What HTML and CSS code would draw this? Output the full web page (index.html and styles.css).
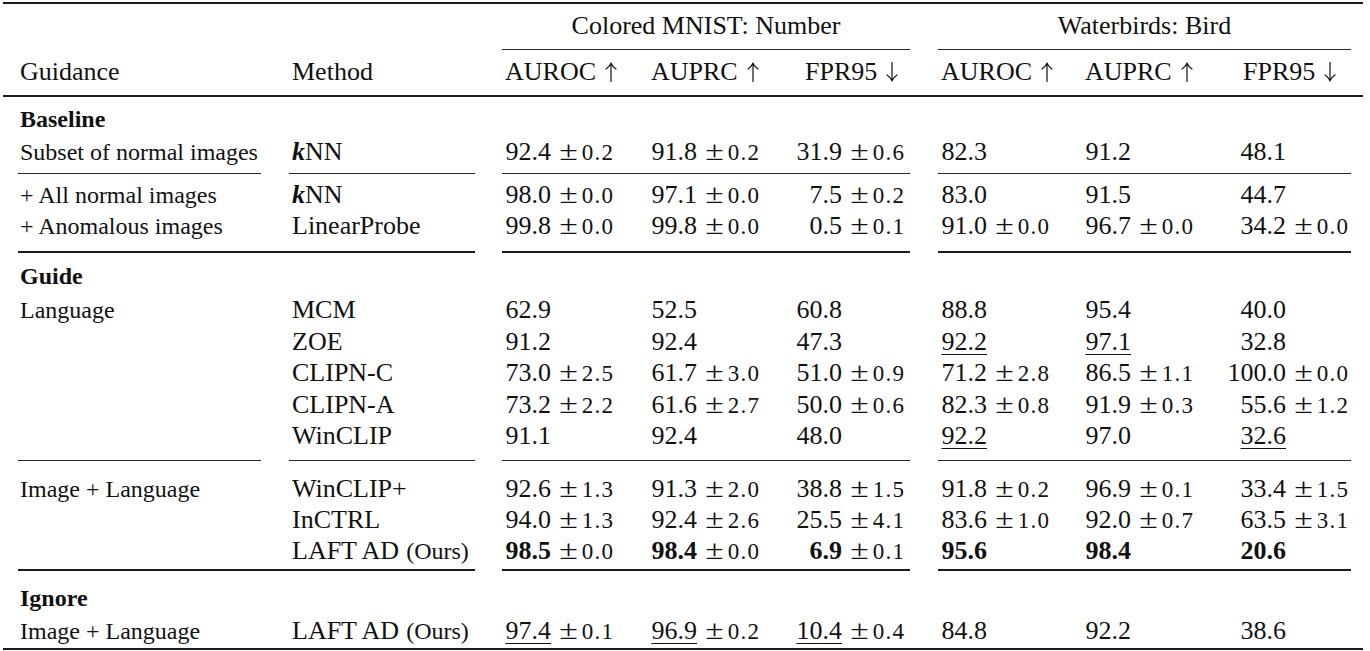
FILE: index.html
```html
<!DOCTYPE html>
<html lang="en">
<head>
<meta charset="utf-8">
<title>LAFT AD results table</title>
<link rel="stylesheet" href="styles.css">
</head>
<body>
<div class="table">
  <div class="rule full top"></div>

  <div class="row head-group">
    <div class="cell"></div>
    <div class="cell"></div>
    <div class="cell grp grp-a">Colored MNIST: Number</div>
    <div class="cell grp grp-b">Waterbirds: Bird</div>
  </div>
  <div class="row seg-row thin gap-group">
    <div class="seg seg-a"></div>
    <div class="seg seg-b"></div>
  </div>

  <div class="row head-cols">
    <div class="cell">Guidance</div>
    <div class="cell">Method</div>
    <div class="cell">AUROC<svg class="arr" viewBox="0 0 14 20" width="14" height="20"><path d="M7 19.5V1.5M2 7Q5.2 5 7 1.2Q8.8 5 12 7"/></svg></div>
    <div class="cell">AUPRC<svg class="arr" viewBox="0 0 14 20" width="14" height="20"><path d="M7 19.5V1.5M2 7Q5.2 5 7 1.2Q8.8 5 12 7"/></svg></div>
    <div class="cell h-fpr-a">FPR95<svg class="arr" viewBox="0 0 14 20" width="14" height="20"><path d="M7 0.5V18.5M2 13Q5.2 15 7 18.8Q8.8 15 12 13"/></svg></div>
    <div class="cell">AUROC<svg class="arr" viewBox="0 0 14 20" width="14" height="20"><path d="M7 19.5V1.5M2 7Q5.2 5 7 1.2Q8.8 5 12 7"/></svg></div>
    <div class="cell">AUPRC<svg class="arr" viewBox="0 0 14 20" width="14" height="20"><path d="M7 19.5V1.5M2 7Q5.2 5 7 1.2Q8.8 5 12 7"/></svg></div>
    <div class="cell h-fpr-b">FPR95<svg class="arr" viewBox="0 0 14 20" width="14" height="20"><path d="M7 0.5V18.5M2 13Q5.2 15 7 18.8Q8.8 15 12 13"/></svg></div>
  </div>
  <div class="rule full mid"></div>

  <div class="row sec first-sec">
    <div class="cell lab sec-title">Baseline</div>
  </div>
  <div class="row tight">
    <div class="cell lab">Subset of normal images</div>
    <div class="cell"><b class="bk">k</b>NN</div>
    <div class="cell"><span class="n">92.4</span><span class="pm">±</span><span class="sd">0.2</span></div>
    <div class="cell"><span class="n">91.8</span><span class="pm">±</span><span class="sd">0.2</span></div>
    <div class="cell"><span class="n">31.9</span><span class="pm">±</span><span class="sd">0.6</span></div>
    <div class="cell"><span class="n">82.3</span></div>
    <div class="cell"><span class="n">91.2</span></div>
    <div class="cell"><span class="n">48.1</span></div>
  </div>
  <div class="row seg-row thin gap-cols">
    <div class="seg seg-1"></div>
    <div class="seg seg-2"></div>
    <div class="seg seg-a"></div>
    <div class="seg seg-b"></div>
  </div>
  <div class="row after-thin">
    <div class="cell lab">+ All normal images</div>
    <div class="cell"><b class="bk">k</b>NN</div>
    <div class="cell"><span class="n">98.0</span><span class="pm">±</span><span class="sd">0.0</span></div>
    <div class="cell"><span class="n">97.1</span><span class="pm">±</span><span class="sd">0.0</span></div>
    <div class="cell"><span class="n">7.5</span><span class="pm">±</span><span class="sd">0.2</span></div>
    <div class="cell"><span class="n">83.0</span></div>
    <div class="cell"><span class="n">91.5</span></div>
    <div class="cell"><span class="n">44.7</span></div>
  </div>
  <div class="row">
    <div class="cell lab">+ Anomalous images</div>
    <div class="cell">LinearProbe</div>
    <div class="cell"><span class="n">99.8</span><span class="pm">±</span><span class="sd">0.0</span></div>
    <div class="cell"><span class="n">99.8</span><span class="pm">±</span><span class="sd">0.0</span></div>
    <div class="cell"><span class="n">0.5</span><span class="pm">±</span><span class="sd">0.1</span></div>
    <div class="cell"><span class="n">91.0</span><span class="pm">±</span><span class="sd">0.0</span></div>
    <div class="cell"><span class="n">96.7</span><span class="pm">±</span><span class="sd">0.0</span></div>
    <div class="cell"><span class="n">34.2</span><span class="pm">±</span><span class="sd">0.0</span></div>
  </div>
  <div class="row seg-row thick gap-sec1">
    <div class="seg seg-12"></div>
    <div class="seg seg-a"></div>
    <div class="seg seg-b"></div>
  </div>

  <div class="row sec guide-sec">
    <div class="cell lab sec-title">Guide</div>
  </div>
  <div class="row loose first-loose">
    <div class="cell lab">Language</div>
    <div class="cell">MCM</div>
    <div class="cell"><span class="n">62.9</span></div>
    <div class="cell"><span class="n">52.5</span></div>
    <div class="cell"><span class="n">60.8</span></div>
    <div class="cell"><span class="n">88.8</span></div>
    <div class="cell"><span class="n">95.4</span></div>
    <div class="cell"><span class="n">40.0</span></div>
  </div>
  <div class="row loose">
    <div class="cell lab"></div>
    <div class="cell">ZOE</div>
    <div class="cell"><span class="n">91.2</span></div>
    <div class="cell"><span class="n">92.4</span></div>
    <div class="cell"><span class="n">47.3</span></div>
    <div class="cell"><span class="n"><u>92.2</u></span></div>
    <div class="cell"><span class="n"><u>97.1</u></span></div>
    <div class="cell"><span class="n">32.8</span></div>
  </div>
  <div class="row loose">
    <div class="cell lab"></div>
    <div class="cell">CLIPN-C</div>
    <div class="cell"><span class="n">73.0</span><span class="pm">±</span><span class="sd">2.5</span></div>
    <div class="cell"><span class="n">61.7</span><span class="pm">±</span><span class="sd">3.0</span></div>
    <div class="cell"><span class="n">51.0</span><span class="pm">±</span><span class="sd">0.9</span></div>
    <div class="cell"><span class="n">71.2</span><span class="pm">±</span><span class="sd">2.8</span></div>
    <div class="cell"><span class="n">86.5</span><span class="pm">±</span><span class="sd">1.1</span></div>
    <div class="cell"><span class="n">100.0</span><span class="pm">±</span><span class="sd">0.0</span></div>
  </div>
  <div class="row loose">
    <div class="cell lab"></div>
    <div class="cell">CLIPN-A</div>
    <div class="cell"><span class="n">73.2</span><span class="pm">±</span><span class="sd">2.2</span></div>
    <div class="cell"><span class="n">61.6</span><span class="pm">±</span><span class="sd">2.7</span></div>
    <div class="cell"><span class="n">50.0</span><span class="pm">±</span><span class="sd">0.6</span></div>
    <div class="cell"><span class="n">82.3</span><span class="pm">±</span><span class="sd">0.8</span></div>
    <div class="cell"><span class="n">91.9</span><span class="pm">±</span><span class="sd">0.3</span></div>
    <div class="cell"><span class="n">55.6</span><span class="pm">±</span><span class="sd">1.2</span></div>
  </div>
  <div class="row loose">
    <div class="cell lab"></div>
    <div class="cell">WinCLIP</div>
    <div class="cell"><span class="n">91.1</span></div>
    <div class="cell"><span class="n">92.4</span></div>
    <div class="cell"><span class="n">48.0</span></div>
    <div class="cell"><span class="n"><u>92.2</u></span></div>
    <div class="cell"><span class="n">97.0</span></div>
    <div class="cell"><span class="n"><u>32.6</u></span></div>
  </div>
  <div class="row seg-row thin gap-guide">
    <div class="seg seg-1"></div>
    <div class="seg seg-2"></div>
    <div class="seg seg-a"></div>
    <div class="seg seg-b"></div>
  </div>

  <div class="row after-guide">
    <div class="cell lab">Image + Language</div>
    <div class="cell">WinCLIP+</div>
    <div class="cell"><span class="n">92.6</span><span class="pm">±</span><span class="sd">1.3</span></div>
    <div class="cell"><span class="n">91.3</span><span class="pm">±</span><span class="sd">2.0</span></div>
    <div class="cell"><span class="n">38.8</span><span class="pm">±</span><span class="sd">1.5</span></div>
    <div class="cell"><span class="n">91.8</span><span class="pm">±</span><span class="sd">0.2</span></div>
    <div class="cell"><span class="n">96.9</span><span class="pm">±</span><span class="sd">0.1</span></div>
    <div class="cell"><span class="n">33.4</span><span class="pm">±</span><span class="sd">1.5</span></div>
  </div>
  <div class="row">
    <div class="cell lab"></div>
    <div class="cell">InCTRL</div>
    <div class="cell"><span class="n">94.0</span><span class="pm">±</span><span class="sd">1.3</span></div>
    <div class="cell"><span class="n">92.4</span><span class="pm">±</span><span class="sd">2.6</span></div>
    <div class="cell"><span class="n">25.5</span><span class="pm">±</span><span class="sd">4.1</span></div>
    <div class="cell"><span class="n">83.6</span><span class="pm">±</span><span class="sd">1.0</span></div>
    <div class="cell"><span class="n">92.0</span><span class="pm">±</span><span class="sd">0.7</span></div>
    <div class="cell"><span class="n">63.5</span><span class="pm">±</span><span class="sd">3.1</span></div>
  </div>
  <div class="row">
    <div class="cell lab"></div>
    <div class="cell">LAFT AD <span class="ours">(Ours)</span></div>
    <div class="cell"><span class="n"><b>98.5</b></span><span class="pm">±</span><span class="sd">0.0</span></div>
    <div class="cell"><span class="n"><b>98.4</b></span><span class="pm">±</span><span class="sd">0.0</span></div>
    <div class="cell"><span class="n"><b>6.9</b></span><span class="pm">±</span><span class="sd">0.1</span></div>
    <div class="cell"><span class="n"><b>95.6</b></span></div>
    <div class="cell"><span class="n"><b>98.4</b></span></div>
    <div class="cell"><span class="n"><b>20.6</b></span></div>
  </div>
  <div class="row seg-row thick gap-sec2">
    <div class="seg seg-12"></div>
    <div class="seg seg-a"></div>
    <div class="seg seg-b"></div>
  </div>

  <div class="row sec ignore-sec">
    <div class="cell lab sec-title">Ignore</div>
  </div>
  <div class="row tight">
    <div class="cell lab">Image + Language</div>
    <div class="cell">LAFT AD <span class="ours">(Ours)</span></div>
    <div class="cell"><span class="n"><u>97.4</u></span><span class="pm">±</span><span class="sd">0.1</span></div>
    <div class="cell"><span class="n"><u>96.9</u></span><span class="pm">±</span><span class="sd">0.2</span></div>
    <div class="cell"><span class="n"><u>10.4</u></span><span class="pm">±</span><span class="sd">0.4</span></div>
    <div class="cell"><span class="n">84.8</span></div>
    <div class="cell"><span class="n">92.2</span></div>
    <div class="cell"><span class="n">38.6</span></div>
  </div>
  <div class="rule full bottom"></div>
</div>
</body>
</html>
```

FILE: styles.css
```css
html, body {
  margin: 0;
  padding: 0;
  background: #ffffff;
}

body {
  width: 1370px;
  height: 651px;
  overflow: hidden;
  font-family: "Liberation Serif", "Times New Roman", serif;
  font-size: 26px;
  color: #111111;
}

.table {
  display: flex;
  flex-direction: column;
  width: 1366px;
}

/* full-width rules */
.rule.full {
  margin: 0 3px;
  background: #1c1c1c;
}
.rule.top {
  margin-top: 2px;
  height: 2px;
}
.rule.mid {
  margin-top: 8px;
  height: 2px;
}
.rule.bottom {
  margin-top: 2px;
  height: 2px;
}

/* rows share one column template */
.row {
  display: grid;
  grid-template-columns: 272px 213px 146px 145px 145px 144px 155px 1fr;
  align-items: baseline;
  padding-left: 20px;
  line-height: 31px;
  height: 31px;
  white-space: nowrap;
}

.cell {
  display: flex;
  align-items: baseline;
}

/* first column body labels are set slightly smaller */
.lab {
  font-size: 24px;
}

/* group header */
.head-group {
  margin-top: 6px;
}
.grp {
  justify-content: center;
}
.grp-a {
  grid-column: 3 / 6;
  margin: 0 31px 0 -3px;
}
.grp-b {
  grid-column: 6 / 9;
  margin: 0 15px 0 -3px;
}

.head-cols {
  margin-top: 6px;
}
.h-fpr-a {
  padding-left: 9px;
}
.h-fpr-b {
  padding-left: 3px;
}

.arr {
  align-self: baseline;
  margin-left: 8px;
  position: relative;
  top: 2px;
  fill: none;
  stroke: #111111;
  stroke-width: 1.2;
  stroke-linecap: round;
}

/* partial rules (cmidrule) */
.seg-row {
  height: auto;
  line-height: 0;
  align-items: stretch;
}
.seg {
  background: #2a2a2a;
}
.thin .seg {
  height: 1px;
}
.thick .seg {
  height: 2px;
  background: #1c1c1c;
}
.seg-1 {
  grid-column: 1 / 2;
  margin: 0 31px 0 -2px;
}
.seg-2 {
  grid-column: 2 / 3;
  margin: 0 30px 0 -3px;
}
.seg-12 {
  grid-column: 1 / 3;
  margin: 0 30px 0 -2px;
}
.seg-a {
  grid-column: 3 / 6;
  margin: 0 31px 0 -3px;
}
.seg-b {
  grid-column: 6 / 9;
  margin: 0 15px 0 -3px;
}

.gap-group { margin-top: 8px; }
.gap-cols  { margin-top: 6px; }
.gap-sec1  { margin-top: 10px; }
.gap-guide { margin-top: 8px; }
.gap-sec2  { margin-top: 3px; }

/* section spacing */
.first-sec { margin-top: 7px; }
.tight { margin-top: 1px; }
.after-thin { margin-top: 5px; }
.guide-sec { margin-top: 8px; }
.first-loose { margin-top: 2px; }
.loose {
  height: 31.5px;
  line-height: 31.5px;
}
.after-guide { margin-top: 12px; }
.ignore-sec { margin-top: 12px; }

.sec-title {
  font-weight: bold;
}

.bk {
  font-style: italic;
  font-weight: bold;
}

/* numbers: decimal aligned box, then the ± and the spread */
.n {
  display: inline-flex;
  justify-content: flex-end;
  width: 46px;
  flex: none;
}
.pm {
  display: inline-block;
  margin-left: 10px;
  font-size: 27px;
  transform: scaleX(1.25);
}
.sd {
  margin-left: 6px;
  font-size: 23px;
  letter-spacing: 1.2px;
}

u {
  text-decoration-thickness: 1px;
  text-underline-offset: 4px;
}

.ours {
  font-size: 24px;
  margin-left: 7px;
}
```
